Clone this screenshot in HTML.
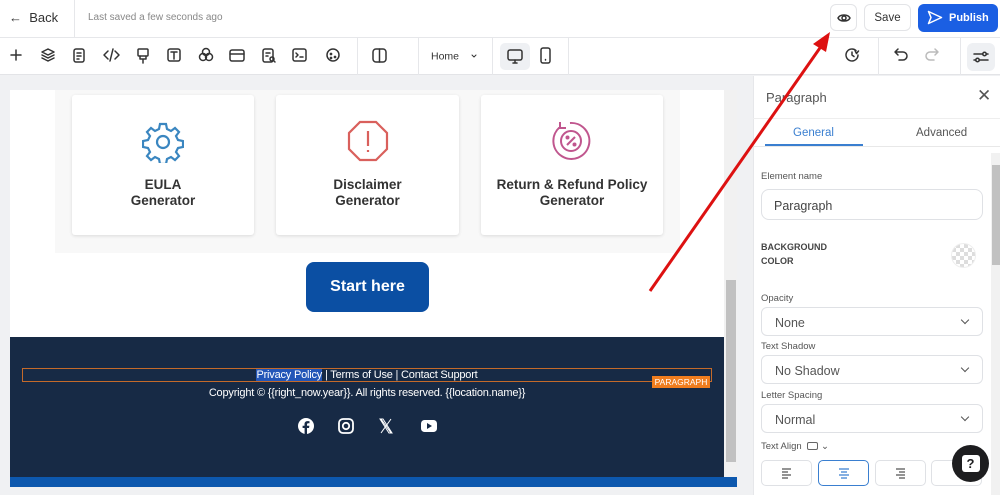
<!DOCTYPE html>
<html><head><meta charset="utf-8"><style>
*{box-sizing:border-box;margin:0;padding:0}
body{width:1000px;height:495px;overflow:hidden;background:#f0f1f3;font-family:"Liberation Sans",sans-serif;position:relative;color:#333}
.a{position:absolute}
.top{left:0;top:0;width:1000px;height:38px;background:#fff;border-bottom:1px solid #e6e7ea}
.tb{left:0;top:38px;width:1000px;height:37px;background:#fff;border-bottom:1px solid #e3e4e7}
.vd{width:1px;background:#e6e7ea}
.ic{stroke:#333;fill:none;stroke-width:1.5;stroke-linecap:round;stroke-linejoin:round}
.card{background:#fff;border-radius:3px;box-shadow:0 1px 3px rgba(0,0,0,.12);text-align:center;font-weight:bold;font-size:13.5px;color:#333;line-height:16px}
.lbl{font-size:9.5px;color:#555;left:761px}
.sel{left:761px;width:222px;height:29px;border:1px solid #dfe1e5;border-radius:6px;background:#fff;font-size:12.5px;color:#555;padding:8px 0 0 13px}
.sel:after{content:"";position:absolute;right:14px;top:9px;width:5px;height:5px;border-right:1.5px solid #555;border-bottom:1.5px solid #555;transform:rotate(45deg)}
.ab{top:460px;height:26px;width:51px;border:1px solid #dfe1e5;border-radius:5px;background:#fff}
.ft{letter-spacing:-0.2px}
</style></head><body>
<div class="a top"></div>
<div class="a" style="left:9px;top:10px;font-size:13px;color:#333">&#8592;&nbsp; Back</div>
<div class="a vd" style="left:74px;top:0;height:38px"></div>
<div class="a" style="left:88px;top:12px;font-size:10px;color:#888">Last saved a few seconds ago</div>
<div class="a" style="left:830px;top:4px;width:27px;height:27px;border:1px solid #e3e4e7;border-radius:6px"><svg class="a" style="left:6px;top:7px" width="14" height="12" viewBox="0 0 14 12"><path class="ic" stroke-width="1.2" d="M1 6C3 2 11 2 13 6C11 10 3 10 1 6Z"/><circle class="ic" stroke-width="1.2" cx="7" cy="6" r="2"/></svg></div>
<div class="a" style="left:864px;top:4px;width:47px;height:27px;border:1px solid #e3e4e7;border-radius:6px;font-size:11.5px;text-align:center;line-height:26px">Save</div>
<div class="a" style="left:918px;top:4px;width:80px;height:28px;background:#1b5fe3;border-radius:6px;color:#fff;font-size:11px;font-weight:bold;line-height:28px;padding-left:31px;white-space:nowrap">Publish</div>
<svg class="a" style="left:927px;top:10px" width="16" height="15" viewBox="0 0 16 15"><path d="M1.5 1.5L14.5 7.5L1.5 13.5L4 7.5Z" fill="none" stroke="#fff" stroke-width="1.5" stroke-linejoin="round"/></svg>

<div class="a tb"></div>
<div class="a" style="left:500px;top:43px;width:30px;height:27px;background:#eef0f3;border-radius:5px"></div>
<div class="a" style="left:967px;top:43px;width:28px;height:28px;background:#eef0f3;border-radius:6px"></div>
<svg class="a" style="left:0;top:38px" width="1000" height="37" viewBox="0 0 1000 37">
<g class="ic">
<path d="M16 12v10M11 17h10"/>
<path d="M48 11l6 3-6 3-6-3z M42 17l6 3 6-3 M42 20l6 3 6-3"/>
<rect x="74" y="11" width="10" height="13" rx="2"/><path d="M77 15h4M77 18h4M77 21h2"/>
<path d="M108 13l-4 4 4 4M115 13l4 4-4 4M113 11l-3 12"/>
<rect x="138" y="11" width="10" height="7" rx="1"/><path d="M140 18v3h6v-3M143 21v4"/>
<rect x="168" y="11" width="12" height="12" rx="2"/><path d="M171 14h6M174 14v7"/>
<circle cx="206" cy="14" r="3.5"/><circle cx="203" cy="19" r="3.5"/><circle cx="209" cy="19" r="3.5"/>
<rect x="230" y="12" width="14" height="11" rx="2"/><path d="M230 16h14"/>
<rect x="263" y="11" width="10" height="13" rx="2"/><circle cx="272" cy="21" r="2"/><path d="M266 15h4M266 18h2M274 23l1 1"/>
<rect x="293" y="11" width="13" height="12" rx="2"/><path d="M296 15l2 2-2 2M300 19h3"/>
<circle cx="333" cy="17" r="6"/><circle cx="331" cy="16" r=".6"/><circle cx="335" cy="19" r=".6"/><circle cx="331" cy="20" r=".6"/>
<rect x="373" y="11" width="13" height="13" rx="3"/><path d="M379.5 11v13"/>
<path d="M472 17l2 2 2-2" stroke-width="1"/>
<rect x="508" y="12" width="14" height="10" rx="2"/><path d="M513 25h4M515 22v3"/>
<rect x="541" y="10" width="9" height="15" rx="2"/><path d="M545.5 21.5v.5"/>
<path d="M858 17a6 6 0 1 1-2-4.5M855 12.5l1.5 3 2-2.5M852 14v3l2 1.5"/>
<path d="M896 14h7a4 4 0 0 1 0 8h-4M898 11l-3 3 3 3"/>
<path d="M937 14h-7a4 4 0 0 0 0 8h4M935 11l3 3-3 3" stroke="#bbb"/>
</g>
<text x="431" y="21.5" font-size="10.5" fill="#333" font-family="Liberation Sans">Home</text>
</svg>
<div class="a vd" style="left:357px;top:38px;height:37px"></div>
<div class="a vd" style="left:418px;top:38px;height:37px"></div>
<div class="a vd" style="left:492px;top:38px;height:37px"></div>
<div class="a vd" style="left:568px;top:38px;height:37px"></div>
<div class="a vd" style="left:878px;top:38px;height:37px"></div>
<div class="a vd" style="left:960px;top:38px;height:37px"></div>
<svg class="a" style="left:972px;top:49px" width="18" height="16" viewBox="0 0 18 16"><g class="ic"><path d="M2 5h9M14 5h2M2 11h2M7 11h9"/><circle cx="12.5" cy="5" r="1.8"/><circle cx="5.5" cy="11" r="1.8"/></g></svg>

<div class="a" style="left:10px;top:90px;width:714px;height:397px;background:#fff"></div>
<div class="a" style="left:55px;top:90px;width:625px;height:163px;background:#f8f8f8"></div>
<div class="a card" style="left:72px;top:95px;width:182px;height:140px;padding-top:82px">EULA<br>Generator</div>
<div class="a card" style="left:276px;top:95px;width:183px;height:140px;padding-top:82px">Disclaimer<br>Generator</div>
<div class="a card" style="left:481px;top:95px;width:182px;height:140px;padding-top:82px">Return &amp; Refund Policy<br>Generator</div>
<svg class="a" style="left:142px;top:121px" width="42" height="42" viewBox="0 0 42 42"><path fill="none" stroke="#3a86c0" stroke-width="2.2" d="M18 3h6l1 5 4 2 4-3 4 4-3 4 2 4 5 1v6l-5 1-2 4 3 4-4 4-4-3-4 2-1 5h-6l-1-5-4-2-4 3-4-4 3-4-2-4-5-1v-6l5-1 2-4-3-4 4-4 4 3 4-2z"/><circle cx="21" cy="21" r="6" fill="none" stroke="#3a86c0" stroke-width="2.2"/></svg>
<svg class="a" style="left:346px;top:120px" width="44" height="42" viewBox="0 0 44 42"><path fill="none" stroke="#d9605c" stroke-width="2.2" d="M14 2h16l11 11v16L30 40H14L3 29V13z"/><path d="M22 11v15M22 30v2" stroke="#d9605c" stroke-width="2.2"/></svg>
<svg class="a" style="left:550px;top:120px" width="42" height="42" viewBox="0 0 42 42"><g fill="none" stroke="#c0568e" stroke-width="2"><path d="M10 7a18 18 0 1 0 10-4M10 2v6h6"/><circle cx="21" cy="21" r="10"/><path d="M17 25l8-8"/><circle cx="17.5" cy="17.5" r="1"/><circle cx="24.5" cy="24.5" r="1"/></g></svg>
<div class="a" style="left:306px;top:262px;width:123px;height:50px;background:#0b4fa3;border-radius:8px;color:#fff;font-weight:bold;font-size:16px;text-align:center;line-height:50px">Start here</div>
<div class="a" style="left:10px;top:337px;width:714px;height:140px;background:#172a45"></div>
<div class="a" style="left:10px;top:477px;width:727px;height:10px;background:#0d58ae"></div>
<div class="a" style="left:22px;top:368px;width:690px;height:14px;border:1px solid #c46a2a"></div>
<div class="a ft" style="left:10px;top:369px;width:714px;text-align:center;font-size:11px;color:#fff"><span style="background:#2356b8">Privacy Policy</span> | Terms of Use | Contact Support</div>
<div class="a" style="left:652px;top:376px;width:58px;height:12px;background:#f07d1e;color:#fff;font-size:8.5px;text-align:center;line-height:12px">PARAGRAPH</div>
<div class="a ft" style="left:10px;top:387px;width:714px;text-align:center;font-size:11px;color:#fff">Copyright © {{right_now.year}}. All rights reserved. {{location.name}}</div>
<svg class="a" style="left:296px;top:416px" width="145" height="20" viewBox="0 0 145 20"><circle cx="10" cy="10" r="8" fill="#fff"/><path d="M11 18v-6h2l.4-2.3H11V8.5c0-.7.3-1.2 1.2-1.2h1.3V5.3c-.6-.1-1.3-.2-2-.2-2 0-3 1.2-3 3.1v1.5H6.6V12h2v6z" fill="#172a45"/><rect x="43" y="3" width="14" height="14" rx="4" fill="none" stroke="#fff" stroke-width="1.8"/><circle cx="50" cy="10" r="3.2" fill="none" stroke="#fff" stroke-width="1.8"/><path d="M85 3l10 14M95 3L85 17M84 3h3l9 14h-3z" stroke="#fff" stroke-width="1" fill="none"/><rect x="125" y="4" width="16" height="12" rx="3.5" fill="#fff"/><path d="M131 7v6l5-3z" fill="#172a45"/></svg>
<div class="a" style="left:724px;top:90px;width:13px;height:387px;background:#f1f1f1"></div>
<div class="a" style="left:726px;top:280px;width:10px;height:182px;background:#c1c1c1"></div>

<div class="a" style="left:753px;top:76px;width:247px;height:419px;background:#fff;border-left:1px solid #e6e7ea"></div>
<div class="a" style="left:766px;top:90px;font-size:13px;color:#555">Paragraph</div>
<div class="a" style="left:977px;top:86px;font-size:17px;color:#555">&#x2715;</div>
<div class="a" style="left:753px;top:118px;width:247px;height:1px;background:#eee"></div>
<div class="a" style="left:793px;top:127px;font-size:11.5px;color:#3a7fd0">General</div>
<div class="a" style="left:916px;top:127px;font-size:11.5px;color:#555">Advanced</div>
<div class="a" style="left:765px;top:144px;width:98px;height:2px;background:#3a7fd0"></div>
<div class="a" style="left:753px;top:146px;width:247px;height:1px;background:#e8e8e8"></div>
<div class="a" style="left:991px;top:153px;width:9px;height:342px;background:#f1f1f1"></div>
<div class="a" style="left:992px;top:165px;width:8px;height:100px;background:#c1c1c1"></div>
<div class="a lbl" style="top:171px">Element name</div>
<div class="a" style="left:761px;top:189px;width:222px;height:31px;border:1px solid #dfe1e5;border-radius:8px;font-size:12.5px;color:#444;padding:9px 0 0 12px">Paragraph</div>
<div class="a" style="left:761px;top:240px;font-size:9px;font-weight:bold;color:#444;line-height:14px">BACKGROUND<br>COLOR</div>
<div class="a" style="left:951px;top:243px;width:25px;height:25px;border-radius:50%;background:repeating-conic-gradient(#ddd 0 25%,#fff 0 50%) 0 0/8px 8px;border:1px solid #eee"></div>
<div class="a lbl" style="top:293px">Opacity</div>
<div class="a sel" style="top:307px">None</div>
<div class="a lbl" style="top:341px">Text Shadow</div>
<div class="a sel" style="top:355px">No Shadow</div>
<div class="a lbl" style="top:390px">Letter Spacing</div>
<div class="a sel" style="top:404px">Normal</div>
<div class="a lbl" style="top:441px">Text Align <span style="display:inline-block;width:11px;height:8px;border:1px solid #666;border-radius:2px;vertical-align:-1px;margin-left:3px"></span> &#8964;</div>
<div class="a ab" style="left:761px"></div>
<div class="a ab" style="left:818px;border-color:#3a7fd0"></div>
<div class="a ab" style="left:875px"></div>
<div class="a ab" style="left:931px"></div>
<svg class="a" style="left:761px;top:460px" width="230" height="26" viewBox="0 0 230 26"><g stroke="#555" stroke-width="1.2"><path d="M21 9h9M21 12h6M21 15h9M21 18h6"/><path d="M78 9h10M80 12h6M78 15h10M80 18h6" stroke="#3a7fd0"/><path d="M135 9h9M138 12h6M135 15h9M138 18h6"/></g></svg>
<div class="a" style="left:952px;top:445px;width:37px;height:37px;border-radius:50%;background:#1d1d1f;color:#fff;font-weight:bold;font-size:17px;text-align:center;line-height:36px"><span style="display:inline-block;background:#fff;color:#1d1d1f;width:18px;height:17px;line-height:17px;border-radius:3px;font-size:13px">?</span></div>
<svg class="a" style="left:0;top:0" width="1000" height="495"><line x1="650" y1="291" x2="822" y2="45" stroke="#d11" stroke-width="3"/><path d="M830 32L813 44L826 52Z" fill="#d11"/></svg>
</body></html>
